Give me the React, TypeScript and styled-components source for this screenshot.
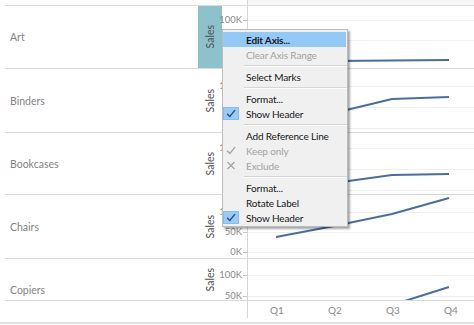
import styled, { createGlobalStyle } from 'styled-components'

const GlobalStyle = createGlobalStyle`
  html, body {
    margin: 0;
    padding: 0;
    background: #fff;
  }
  * {
    box-sizing: border-box;
  }
`

const COLS = '193px 24px 25px 227px'
const CHART_X = 248
const CHART_W = 226

type Tick = { label: string; y: number }
type Pane = {
  name: string
  top: number
  height: number
  ticks: Tick[]
  points: [number, number][]
  selected?: boolean
  labelBottom?: boolean
}

const panes: Pane[] = [
  {
    name: 'Art',
    top: 5,
    height: 63,
    selected: true,
    ticks: [
      { label: '100K', y: 20 },
      { label: '50K', y: 40 },
    ],
    points: [[276, 61], [334, 61], [392, 60.5], [449, 60]],
  },
  {
    name: 'Binders',
    top: 68,
    height: 64,
    ticks: [
      { label: '100K', y: 86 },
      { label: '50K', y: 107 },
      { label: '0K', y: 128 },
    ],
    points: [[276, 119], [334, 113], [392, 99], [449, 97]],
  },
  {
    name: 'Bookcases',
    top: 132,
    height: 62,
    ticks: [
      { label: '100K', y: 148 },
      { label: '50K', y: 169 },
      { label: '0K', y: 190 },
    ],
    points: [[276, 188], [334, 183], [392, 175], [449, 174]],
  },
  {
    name: 'Chairs',
    top: 194,
    height: 64,
    ticks: [
      { label: '100K', y: 212 },
      { label: '50K', y: 232 },
      { label: '0K', y: 252 },
    ],
    points: [[276, 237], [334, 226], [392, 214], [449, 198]],
  },
  {
    name: 'Copiers',
    top: 258,
    height: 42,
    labelBottom: true,
    ticks: [
      { label: '100K', y: 275 },
      { label: '50K', y: 296 },
    ],
    points: [[334, 330], [392, 305], [449, 287]],
  },
]

type MenuEntry =
  | { sep: true }
  | { sep?: false; text: string; bold?: boolean; active?: boolean; disabled?: boolean; mark?: 'box' | 'check' | 'cross' }

const menu: MenuEntry[] = [
  { text: 'Edit Axis...', bold: true, active: true },
  { text: 'Clear Axis Range', disabled: true },
  { sep: true },
  { text: 'Select Marks' },
  { sep: true },
  { text: 'Format...' },
  { text: 'Show Header', mark: 'box' },
  { sep: true },
  { text: 'Add Reference Line' },
  { text: 'Keep only', disabled: true, mark: 'check' },
  { text: 'Exclude', disabled: true, mark: 'cross' },
  { sep: true },
  { text: 'Format...' },
  { text: 'Rotate Label' },
  { text: 'Show Header', mark: 'box' },
]

function Mark({ kind, disabled }: { kind?: 'box' | 'check' | 'cross'; disabled?: boolean }) {
  if (!kind) return <MarkBox />
  const color = disabled ? '#a3a3a3' : '#1f4f80'
  return (
    <MarkBox $boxed={kind === 'box'}>
      <svg width='10' height='9' viewBox='0 0 10 9'>
        {kind === 'cross' ? (
          <path d='M1.5 1 L8.5 8 M8.5 1 L1.5 8' stroke={color} strokeWidth='1.2' fill='none' />
        ) : (
          <path d='M1 4.8 L3.8 7.5 L9 1.2' stroke={color} strokeWidth='1.3' fill='none' />
        )}
      </svg>
    </MarkBox>
  )
}

function ChartPane({ pane }: { pane: Pane }) {
  const h = pane.height - 1
  return (
    <ChartCell>
      <svg width={CHART_W} height={h} viewBox={`${CHART_X} ${pane.top + 1} ${CHART_W} ${h}`}>
        {pane.ticks.map((t) => (
          <line key={t.label} x1={CHART_X} x2={CHART_X + CHART_W} y1={t.y + 0.5} y2={t.y + 0.5} stroke='#efefef' />
        ))}
        <polyline
          points={pane.points.map((p) => p.join(',')).join(' ')}
          fill='none'
          stroke='#4b6d9c'
          strokeWidth='2'
          strokeLinejoin='round'
        />
      </svg>
    </ChartCell>
  )
}

export default function App() {
  return (
    <Frame>
      <GlobalStyle />
      <Table>
        <TopStrip>
          <span />
          <span />
          <AxisCell>
            <TickLabel style={{ top: -3 }}>0K</TickLabel>
          </AxisCell>
          <TopChart />
        </TopStrip>
        {panes.map((pane) => (
          <Row key={pane.name} $h={pane.height}>
            <RowLabel $bottom={pane.labelBottom}>{pane.name}</RowLabel>
            <MeasureHeader $selected={pane.selected}>
              <VerticalText>Sales</VerticalText>
            </MeasureHeader>
            <AxisCell>
              {pane.ticks.map((t) => (
                <TickLabel key={t.label} style={{ top: t.y - pane.top - 1 }}>
                  {t.label}
                </TickLabel>
              ))}
            </AxisCell>
            <ChartPane pane={pane} />
          </Row>
        ))}
        <Row $h={22}>
          <span />
          <span />
          <span />
          <QuarterAxis>
            {['Q1', 'Q2', 'Q3', 'Q4'].map((q) => (
              <Quarter key={q}>{q}</Quarter>
            ))}
          </QuarterAxis>
        </Row>
      </Table>
      <BottomRule />

      <Menu>
        {menu.map((m, i) =>
          m.sep ? (
            <Separator key={i} />
          ) : (
            <Item key={i} $active={m.active} $disabled={m.disabled} $bold={m.bold}>
              <Mark kind={m.mark} disabled={m.disabled} />
              <span>{m.text}</span>
            </Item>
          )
        )}
      </Menu>
    </Frame>
  )
}

const Frame = styled.div`
  position: relative;
  width: 474px;
  height: 325px;
  overflow: hidden;
  background: #fff;
  font-family: Lato, 'Open Sans', sans-serif;
`

const Table = styled.div`
  margin-left: 5px;
  width: 469px;
`

const TopStrip = styled.div`
  display: grid;
  grid-template-columns: ${COLS};
  height: 5px;
  overflow: hidden;
`

const TopChart = styled.div`
  border-left: 1px solid #d6d6d6;
  background: #f6f6f6;
`

const Row = styled.div<{ $h: number }>`
  display: grid;
  grid-template-columns: ${COLS};
  height: ${(p) => p.$h}px;
  border-top: 1px solid #d9d9d9;
`

const RowLabel = styled.div<{ $bottom?: boolean }>`
  display: flex;
  align-items: ${(p) => (p.$bottom ? 'flex-end' : 'center')};
  padding: 0 0 ${(p) => (p.$bottom ? '4px' : '0')} 5px;
  font-size: 10.5px;
  color: #838383;
`

const MeasureHeader = styled.div<{ $selected?: boolean }>`
  display: flex;
  align-items: center;
  justify-content: center;
  background: ${(p) => (p.$selected ? '#8dc2cc' : 'transparent')};
`

const VerticalText = styled.span`
  writing-mode: vertical-rl;
  transform: rotate(180deg);
  font-size: 10.5px;
  color: #505050;
`

const AxisCell = styled.div`
  position: relative;
`

const TickLabel = styled.span`
  position: absolute;
  right: 0;
  transform: translateY(-50%);
  display: flex;
  align-items: center;
  gap: 1px;
  font-size: 9.5px;
  line-height: 10px;
  color: #8a8a8a;
  white-space: nowrap;

  &::after {
    content: '';
    width: 4px;
    border-top: 1px solid #c4c4c4;
  }
`

const ChartCell = styled.div`
  border-left: 1px solid #d6d6d6;
  overflow: hidden;

  svg {
    display: block;
  }
`

const QuarterAxis = styled.div`
  display: grid;
  grid-template-columns: repeat(4, 58px);
  align-items: center;
  border-left: 1px solid #d6d6d6;
  margin-bottom: 4px;
  overflow: hidden;
`

const Quarter = styled.span`
  text-align: center;
  font-size: 10px;
  color: #8a8a8a;
  padding-top: 1px;
`

const BottomRule = styled.div`
  height: 2px;
  background: #e2e2e2;
`

const Menu = styled.div`
  position: absolute;
  left: 222px;
  top: 29px;
  width: 126px;
  padding: 2px 0 1px;
  background: #f0f0f0;
  border: 1px solid #bcbcbc;
  box-shadow: 2px 2px 2px rgba(0, 0, 0, 0.35);
  font-family: Lato, 'Open Sans', sans-serif;
  font-size: 10px;
  letter-spacing: -0.15px;
`

const Item = styled.div<{ $active?: boolean; $disabled?: boolean; $bold?: boolean }>`
  display: grid;
  grid-template-columns: 23px 1fr;
  align-items: center;
  height: 15px;
  margin-right: 1px;
  background: ${(p) => (p.$active ? '#93c9f6' : 'transparent')};
  color: ${(p) => (p.$disabled ? '#a2a2a2' : '#161616')};
  font-weight: ${(p) => (p.$bold ? 700 : 400)};
  white-space: nowrap;
`

const MarkBox = styled.span<{ $boxed?: boolean }>`
  display: flex;
  align-items: center;
  justify-content: center;
  width: 16px;
  height: 13px;
  background: ${(p) => (p.$boxed ? '#99cbf4' : 'transparent')};
  border: 1px solid ${(p) => (p.$boxed ? '#86bbeb' : 'transparent')};
`

const Separator = styled.div`
  display: flex;
  align-items: center;
  height: 7px;
  padding-left: 21px;

  &::after {
    content: '';
    flex: 1;
    border-top: 1px solid #d6d6d6;
    border-bottom: 1px solid #fbfbfb;
  }
`
